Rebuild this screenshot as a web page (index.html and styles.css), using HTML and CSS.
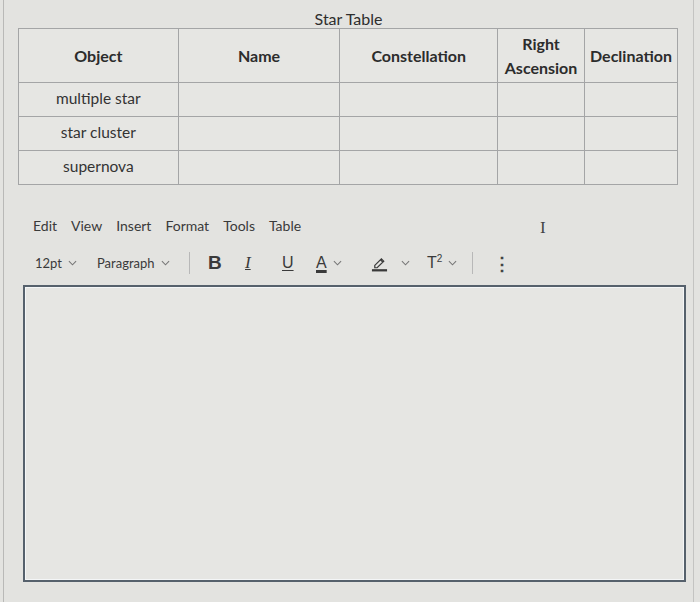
FILE: index.html
```html
<!DOCTYPE html>
<html>
<head>
<meta charset="utf-8">
<link rel="stylesheet" href="styles.css">
</head>
<body>
<div class="page">
  <div class="title">Star Table</div>
  <table class="stars">
    <colgroup>
      <col class="c1"><col class="c2"><col class="c3"><col class="c4"><col class="c5">
    </colgroup>
    <thead>
      <tr><th>Object</th><th>Name</th><th>Constellation</th><th>Right<br>Ascension</th><th>Declination</th></tr>
    </thead>
    <tbody>
      <tr><td>multiple star</td><td></td><td></td><td></td><td></td></tr>
      <tr><td>star cluster</td><td></td><td></td><td></td><td></td></tr>
      <tr><td>supernova</td><td></td><td></td><td></td><td></td></tr>
    </tbody>
  </table>

  <div class="menubar">
    <span>Edit</span><span>View</span><span>Insert</span><span>Format</span><span>Tools</span><span>Table</span>
    <span class="ibeam">I</span>
  </div>

  <div class="toolbar">
    <span class="drop size">12pt<svg class="chev" viewBox="0 0 10 6"><path d="M1 1l4 4 4-4"/></svg></span>
    <span class="drop para">Paragraph<svg class="chev" viewBox="0 0 10 6"><path d="M1 1l4 4 4-4"/></svg></span>
    <span class="sep"></span>
    <span class="btn bold">B</span>
    <span class="btn ital">I</span>
    <span class="btn under">U</span>
    <span class="btn acolor"><span class="aletter">A</span><svg class="chev" viewBox="0 0 10 6"><path d="M1 1l4 4 4-4"/></svg></span>
    <span class="btn hl"><svg class="pen" viewBox="0 0 20 18"><path d="M5 11l7-7 2.5 2.5-7 7H5z M11 5l2.5 2.5"/><rect x="2" y="15" width="16" height="2.4"/></svg><svg class="chev" viewBox="0 0 10 6"><path d="M1 1l4 4 4-4"/></svg></span>
    <span class="btn sup"><span class="tsup">T<sup>2</sup></span><svg class="chev" viewBox="0 0 10 6"><path d="M1 1l4 4 4-4"/></svg></span>
    <span class="sep sep2"></span>
    <span class="dots">&#8942;</span>
  </div>

  <div class="editor"></div>
</div>
</body>
</html>
```
FILE: styles.css
```css
html, body {
  margin: 0;
  padding: 0;
  background: #e3e3e0;
}
body {
  font-family: Lato, "Liberation Sans", sans-serif;
  color: #333;
  width: 700px;
  height: 602px;
  overflow: hidden;
}
.page {
  margin: 0 6px 0 3px;
  height: 602px;
  border-left: 1px solid #b9b9b7;
  border-right: 1px solid #c4c4c2;
  box-sizing: border-box;
  display: flex;
  flex-direction: column;
}
.title {
  text-align: center;
  font-size: 16px;
  line-height: 18px;
  padding-top: 10px;
  color: #2e2e2e;
}
.stars {
  margin: 0 0 0 14px;
  width: 660px;
  border-collapse: collapse;
  border: 1px solid #7d7f82;
  background: #e6e6e3;
}
.c1 { width: 160px; }
.c2 { width: 162px; }
.c3 { width: 158px; }
.c4 { width: 87px; }
.c5 { width: 93px; }
.stars th, .stars td {
  border: 1px solid #a4a5a6;
  text-align: center;
  padding: 0;
  color: #333;
}
.stars th {
  height: 53px;
  font-size: 16px;
  font-weight: bold;
  line-height: 24px;
  color: #2c2c2c;
}
.stars td {
  font-size: 15.5px;
  font-weight: normal;
  padding-bottom: 3px;
  box-sizing: border-box;
  height: 34px;
}
.menubar {
  margin-top: 32px;
  margin-left: 29px;
  display: flex;
  gap: 14px;
  font-size: 14px;
  line-height: 18px;
  color: #3a3a3a;
  position: relative;
}
.ibeam {
  position: absolute;
  left: 507px;
  top: 2px;
  font-family: "Liberation Serif", serif;
  font-size: 17px;
  color: #444;
}
.toolbar {
  margin-top: 17px;
  margin-left: 31px;
  height: 22px;
  display: flex;
  align-items: center;
  font-size: 13px;
  color: #3a3a3a;
}
.drop {
  display: flex;
  align-items: center;
}
.chev {
  width: 9px;
  height: 6px;
  fill: none;
  stroke: #777;
  stroke-width: 1.2;
  margin-left: 6px;
}
.size { width: 62px; }
.para { width: 92px; }
.sep {
  width: 1px;
  height: 22px;
  background: #b8b8b8;
  margin-right: 18px;
}
.btn {
  display: flex;
  align-items: center;
  color: #3a3a3a;
}
.bold {
  font-family: "Liberation Sans", sans-serif;
  font-weight: bold;
  font-size: 19px;
  width: 37px;
}
.ital {
  font-family: "Liberation Serif", serif;
  font-style: italic;
  font-size: 17px;
  text-decoration: underline;
  text-decoration-thickness: 1px;
  text-underline-offset: 1px;
  width: 37px;
}
.under {
  font-family: "Liberation Sans", sans-serif;
  font-size: 16px;
  text-decoration: underline;
  text-underline-offset: 2px;
  width: 34px;
}
.acolor { width: 54px; }
.aletter {
  font-family: "Liberation Sans", sans-serif;
  font-size: 16px;
  text-decoration: underline;
  text-decoration-thickness: 3px;
  text-underline-offset: 2px;
}
.pen {
  width: 19px;
  height: 17px;
  fill: none;
  stroke: #3a3a3a;
  stroke-width: 1.3;
}
.pen rect { fill: #3a3a3a; stroke: none; }
.hl { width: 57px; }
.hl .chev { margin-left: 12px; }
.sup { width: 45px; }
.tsup {
  font-family: "Liberation Sans", sans-serif;
  font-size: 16px;
}
.tsup sup { font-size: 10px; line-height: 0; }
.sep2 { margin-right: 20px; }
.dots {
  font-size: 18px;
  font-weight: bold;
  color: #444;
}
.editor {
  margin: 11px 0 0 19px;
  width: 663px;
  height: 297px;
  box-sizing: border-box;
  border: 2px solid #56616c;
  box-shadow: inset 0 0 0 1px #f4f6f7;
  background: #e6e6e3;
}
```
